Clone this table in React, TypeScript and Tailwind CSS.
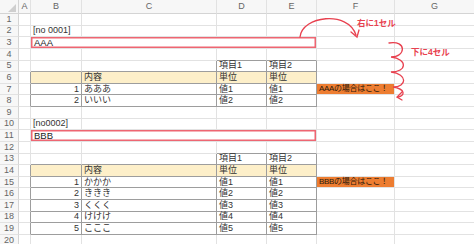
import React from "react";

const COLS = ["A", "B", "C", "D", "E", "F", "G"];

const data: Record<number, Record<number, string>> = {
  2: { 1: "[no 0001]" },
  5: { 3: "項目1", 4: "項目2" },
  6: { 2: "内容", 3: "単位", 4: "単位" },
  7: { 1: "1", 2: "あああ", 3: "値1", 4: "値1", 5: "AAAの場合はここ！" },
  8: { 1: "2", 2: "いいい", 3: "値2", 4: "値2" },
  10: { 1: "[no0002]" },
  13: { 3: "項目1", 4: "項目2" },
  14: { 2: "内容", 3: "単位", 4: "単位" },
  15: { 1: "1", 2: "かかか", 3: "値1", 4: "値1", 5: "BBBの場合はここ！" },
  16: { 1: "2", 2: "ききき", 3: "値2", 4: "値2" },
  17: { 1: "3", 2: "くくく", 3: "値3", 4: "値3" },
  18: { 1: "4", 2: "けけけ", 3: "値4", 4: "値4" },
  19: { 1: "5", 2: "こここ", 3: "値5", 4: "値5" },
};

const merged: Record<number, string> = { 3: "AAA", 11: "BBB" };

function inTable(r: number, c: number) {
  if ((r === 5 || r === 13) && (c === 3 || c === 4)) return true;
  if (((r >= 6 && r <= 8) || (r >= 14 && r <= 19)) && c >= 1 && c <= 4) return true;
  return false;
}

function Cell({ r, c }: { r: number; c: number }) {
  const text = data[r]?.[c];
  const darkR = inTable(r, c) || inTable(r, c + 1);
  const darkB = inTable(r, c) || inTable(r + 1, c);
  const yellow = (r === 6 || r === 14) && c >= 1 && c <= 4;
  const orange = (r === 7 || r === 15) && c === 5;
  const numeric = c === 1 && inTable(r, c);
  return (
    <div
      className={[
        "flex items-center overflow-visible whitespace-nowrap border-r border-b px-[2px] leading-none",
        darkR ? "border-r-[#9d9d9d]" : "border-r-[#e2e2e2]",
        darkB ? "border-b-[#9d9d9d]" : "border-b-[#e2e2e2]",
        yellow ? "bg-[#fdefc9]" : orange ? "bg-[#ed7d31]" : "bg-white",
        numeric ? "justify-end" : "justify-start",
        orange ? "text-[8px] tracking-[-0.3px] text-[#2b1a0c]" : "text-[9px] text-[#333]",
      ].join(" ")}
    >
      {text}
    </div>
  );
}

export default function App() {
  const rows = Array.from({ length: 20 }, (_, i) => i + 1);
  return (
    <div
      className="relative h-[244px] w-[474px] overflow-hidden bg-white"
      style={{ fontFamily: '"Liberation Sans", "Noto Sans CJK JP", sans-serif' }}
    >
      <div className="grid grid-cols-[19px_12px_51px_135px_50px_50px_78px_80px] grid-rows-[14px_repeat(20,11.63px)]">
        {/* corner */}
        <div className="relative border-r border-b border-[#d4d4d4] bg-[#f7f7f7]">
          <svg width="19" height="14" className="absolute inset-0">
            <polygon points="16,4 16,12 8,12" fill="#cfcfcf" />
          </svg>
        </div>
        {COLS.map((c) => (
          <div
            key={c}
            className="flex items-center justify-center border-r border-b border-r-[#e2e2e2] border-b-[#d4d4d4] bg-[#f7f7f7] text-[9px] text-[#666]"
          >
            {c}
          </div>
        ))}
        {rows.map((r) => (
          <React.Fragment key={r}>
            <div className="flex items-center justify-center border-r border-b border-r-[#d4d4d4] border-b-[#e2e2e2] bg-[#f7f7f7] text-[9px] leading-none text-[#666]">
              {r}
            </div>
            {merged[r] ? (
              <>
                <Cell r={r} c={0} />
                <div className="col-span-4 flex items-center border-r border-b border-r-[#e2e2e2] border-b-[#e2e2e2] bg-white">
                  <div className="flex h-full w-full items-center px-[3px] text-[9.5px] leading-none text-[#222] shadow-[inset_0_0_0_1.5px_#ee6672]">
                    {merged[r]}
                  </div>
                </div>
                <Cell r={r} c={5} />
                <Cell r={r} c={6} />
              </>
            ) : (
              COLS.map((_, c) => <Cell key={c} r={r} c={c} />)
            )}
          </React.Fragment>
        ))}
      </div>

      {/* arrows */}
      <svg
        className="pointer-events-none absolute inset-0"
        width="474"
        height="244"
        viewBox="0 0 474 244"
        fill="none"
        stroke="#e8414f"
        strokeWidth="1.3"
        strokeLinecap="round"
      >
        <path d="M300 37 C302 16, 348 10, 356 35" />
        <path d="M351 32 L357 37 L359 30" />
        <path d="M389 43 C407 40, 406 57, 391 57 C408 59, 407 72, 391 72 C408 74, 407 87, 393 87 C406 89, 405 96, 398 97" />
        <path d="M402 92 L397 97 L402 100" />
      </svg>
      <span className="absolute left-[357px] top-[19px] whitespace-nowrap text-[8.5px] font-bold leading-none text-[#e8414f]">
        右に1セル
      </span>
      <span className="absolute left-[411px] top-[48px] whitespace-nowrap text-[8.5px] font-bold leading-none text-[#e8414f]">
        下に4セル
      </span>
    </div>
  );
}
